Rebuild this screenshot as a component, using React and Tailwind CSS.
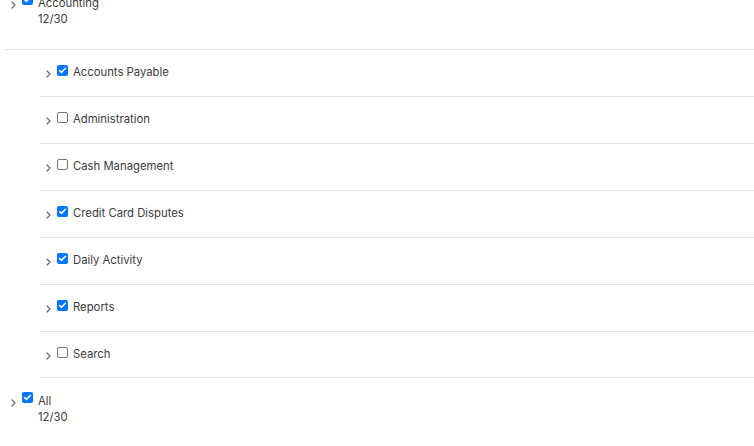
import { Check } from 'lucide-react'

const CHILDREN = [
    { name: 'Accounts Payable', checked: true },
    { name: 'Administration', checked: false },
    { name: 'Cash Management', checked: false },
    { name: 'Credit Card Disputes', checked: true },
    { name: 'Daily Activity', checked: true },
    { name: 'Reports', checked: true },
    { name: 'Search', checked: false },
]

function Chevron() {
    return (
        <svg width="5" height="8" viewBox="0 0 5 8" fill="none" className="block">
            <polyline points="1,1 4,4 1,7" stroke="#666" strokeWidth="1.2" strokeLinecap="round" strokeLinejoin="round" />
        </svg>
    )
}

function Box({ checked }) {
    return checked ? (
        <span className="w-[11px] h-[11px] rounded-[2px] bg-[#0075ff] flex items-center justify-center shrink-0">
            <Check size={9} strokeWidth={4} className="text-white" />
        </span>
    ) : (
        <span className="block w-[11px] h-[11px] rounded-[2px] border border-[#767676] bg-white shrink-0" />
    )
}

function Header({ label, count }) {
    return (
        <div className="flex items-start pl-[6px] pt-[14px] h-[69px]">
            <div className="w-[11px] pt-[7px]"><Chevron /></div>
            <div className="w-[16px]"><Box checked /></div>
            <div className="leading-[16px] pt-[1px]">
                <div>{label}</div>
                <div>{count}</div>
            </div>
        </div>
    )
}

export default function App() {
    return (
        <div className="w-[754px] h-[446px] overflow-hidden bg-white text-[11.3px] text-[#3a3a3a] font-['Inter',sans-serif]">
            <div className="-mt-[20px]">
                <div className="ml-[5px] border-b border-[#e3e3e3]">
                    <Header label="Accounting" count="12/30" />
                </div>
                <div className="ml-[40px]">
                    {CHILDREN.map((c, i) => (
                        <div key={c.name} className={`${i === CHILDREN.length - 1 ? 'h-[46px]' : 'h-[47px]'} border-b border-[#e3e3e3] flex items-start pl-[6px] pt-[15px]`}>
                            <div className="w-[11px] pt-[5px]"><Chevron /></div>
                            <div className="w-[16px]"><Box checked={c.checked} /></div>
                            <div className="leading-[16px] -mt-[1px]">{c.name}</div>
                        </div>
                    ))}
                </div>
                <div className="ml-[5px]">
                    <Header label="All" count="12/30" />
                </div>
            </div>
        </div>
    )
}
